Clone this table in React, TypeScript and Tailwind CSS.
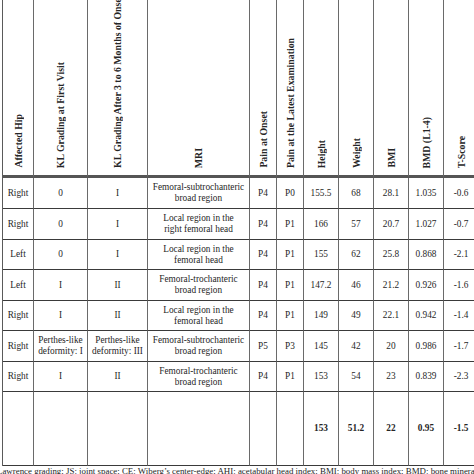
import React from "react";

const cols = "grid-cols-[31px_54px_60px_102px_27px_27px_35px_35px_35px_35px_35px]";

const headers = [
  "Affected Hip",
  "KL Grading at First Visit",
  "KL Grading After 3 to 6 Months of Onset",
  "MRI",
  "Pain at Onset",
  "Pain at the Latest Examination",
  "Height",
  "Weight",
  "BMI",
  "BMD (L1-4)",
  "T-Score",
];

type Row = string[];

const rows: Row[] = [
  ["Right", "0", "I", "Femoral-subtrochanteric\nbroad region", "P4", "P0", "155.5", "68", "28.1", "1.035", "-0.6"],
  ["Right", "0", "I", "Local region in the\nright femoral head", "P4", "P1", "166", "57", "20.7", "1.027", "-0.7"],
  ["Left", "0", "I", "Local region in the\nfemoral head", "P4", "P1", "155", "62", "25.8", "0.868", "-2.1"],
  ["Left", "I", "II", "Femoral-trochanteric\nbroad region", "P4", "P1", "147.2", "46", "21.2", "0.926", "-1.6"],
  ["Right", "I", "II", "Local region in the\nfemoral head", "P4", "P1", "149", "49", "22.1", "0.942", "-1.4"],
  ["Right", "Perthes-like\ndeformity: I", "Perthes-like\ndeformity: III", "Femoral-subtrochanteric\nbroad region", "P5", "P3", "145", "42", "20", "0.986", "-1.7"],
  ["Right", "I", "II", "Femoral-trochanteric\nbroad region", "P4", "P1", "153", "54", "23", "0.839", "-2.3"],
];

const rowHeights = ["h-[31px]", "h-[31px]", "h-[30px]", "h-[31px]", "h-[30px]", "h-[31px]", "h-[30px]"];

const summary = ["", "", "", "", "", "", "153", "51.2", "22", "0.95", "-1.5"];

export default function App() {
  return (
    <div
      className="w-[474px] h-[474px] overflow-hidden bg-white text-[#262626]"
      style={{ fontFamily: '"Liberation Serif", "Times New Roman", serif' }}
    >
      <div className="ml-[2px] w-[480px] border-l border-[#5a5a5a]">
        <div className={`grid ${cols}`}>
          {headers.map((h, i) => (
            <div
              key={i}
              className="h-[178px] overflow-hidden border-r border-r-[#6a6a6a] border-b-[3px] border-b-[#555] flex flex-col justify-end items-center pb-[7px]"
            >
              <span className="[writing-mode:vertical-rl] rotate-180 whitespace-nowrap font-bold text-[9.8px] leading-[11px]">
                {h}
              </span>
            </div>
          ))}
        </div>
        {rows.map((r, ri) => (
          <div key={ri} className={`grid ${cols}`}>
            {r.map((c, ci) => (
              <div
                key={ci}
                className={`${rowHeights[ri]} border-r border-r-[#6a6a6a] border-b border-b-[#3a3a3a] flex items-center justify-center text-center text-[9.3px] leading-[10.7px]`}
              >
                <span className="whitespace-pre">{c}</span>
              </div>
            ))}
          </div>
        ))}
        <div className={`grid ${cols}`}>
          {summary.map((c, ci) => (
            <div
              key={ci}
              className="h-[74px] border-r border-r-[#6a6a6a] border-b border-b-[#3a3a3a] flex items-center justify-center font-bold text-[9.3px]"
            >
              {c}
            </div>
          ))}
        </div>
      </div>
      <div className="-ml-[3px] whitespace-nowrap text-[8.9px] leading-[9px] pt-[1px]">
        Lawrence grading; JS: joint space; CE: Wiberg’s center-edge; AHI: acetabular head index; BMI: body mass index; BMD: bone mineral density
      </div>
    </div>
  );
}
